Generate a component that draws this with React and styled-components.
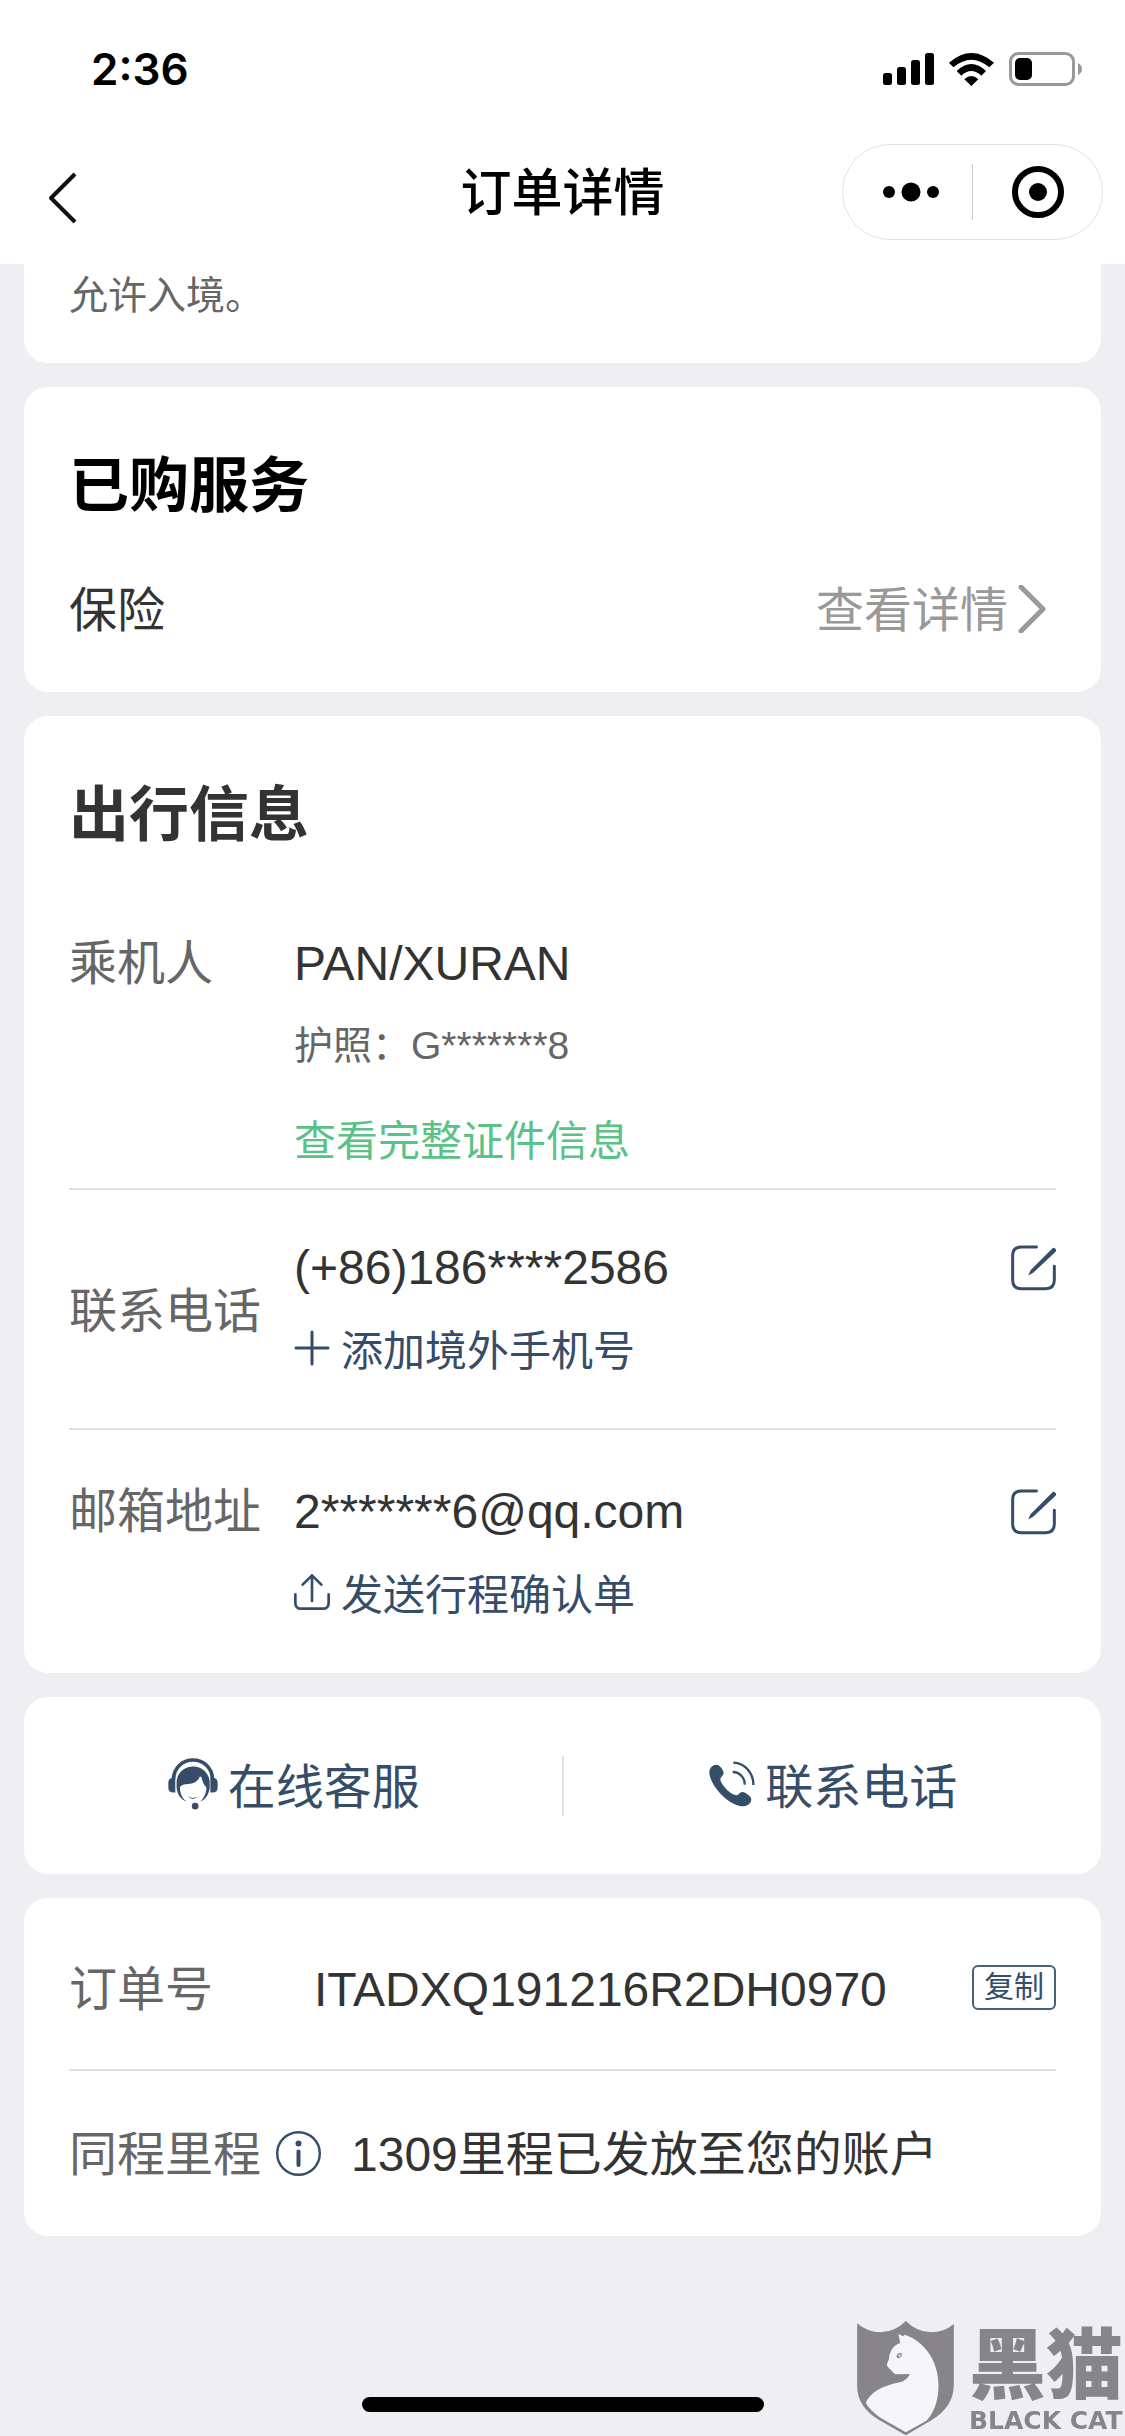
import React from 'react';
import styled, { createGlobalStyle } from 'styled-components';

const GlobalStyle = createGlobalStyle`
  * {
    box-sizing: border-box;
  }

  body {
    margin: 0;
    background: #eeeef3;
    font-family: 'Liberation Sans', 'Noto Sans CJK SC', sans-serif;
    color: #333;
  }

  h1, h2, p {
    margin: 0;
  }

  button {
    display: flex;
    align-items: center;
    justify-content: center;
    padding: 0;
    border: 0;
    background: none;
    color: inherit;
    font: inherit;
    cursor: pointer;
  }

  a {
    text-decoration: none;
  }

  svg {
    display: block;
    flex: none;
  }
`;

const Page = styled.div`
  min-height: 100vh;
  padding-bottom: 200px;
`;

const Header = styled.header`
  background: #fff;
`;

const StatusBar = styled.div`
  display: flex;
  align-items: center;
  justify-content: space-between;
  height: 138px;
  padding: 0 42px 0 91px;
`;

const Time = styled.time`
  font: 600 44px/54px Inter, sans-serif;
  color: #000;
`;

const StatusIcons = styled.div`
  display: flex;
  align-items: center;
  gap: 15px;
`;

const NavBar = styled.div`
  display: grid;
  grid-template-columns: 1fr auto 1fr;
  align-items: center;
  height: 126px;
  padding: 6px 22px 24px;
`;

const BackButton = styled.button`
  justify-self: start;
  padding: 12px 24px 0;
`;

const Title = styled.h1`
  padding-top: 4px;
  font-size: 51px;
  line-height: 72px;
  font-weight: 500;
  color: #000;
`;

const Capsule = styled.div`
  justify-self: end;
  display: flex;
  align-items: center;
  width: 261px;
  height: 96px;
  border: 1px solid #e2e2e2;
  border-radius: 48px;
`;

const CapsuleButton = styled.button`
  width: 129px;
  height: 100%;
  padding-left: ${(props) => (props.$inset ? '6px' : '0')};
`;

const CapsuleDivider = styled.div`
  width: 1px;
  height: 56px;
  background: #ccc;
`;

const Main = styled.main`
  display: flex;
  flex-direction: column;
  gap: 24px;
  padding: 0 24px;
`;

const Card = styled.section`
  padding: 58px 45px 47px;
  background: #fff;
  border-radius: 24px;
`;

const NoticeCard = styled(Card)`
  padding: 2px 45px 37px;
  border-radius: 0 0 24px 24px;
`;

const Notice = styled.p`
  font-size: 39px;
  line-height: 60px;
  color: #666;
`;

const Heading = styled.h2`
  font-size: 60px;
  line-height: 84px;
  font-weight: 700;
  color: ${(props) => props.$color || '#333'};
`;

const ServiceRow = styled.div`
  display: flex;
  justify-content: space-between;
  padding: 48px 10px 0 0;
  font-size: 48px;
  line-height: 68px;
`;

const DetailLink = styled.a`
  display: flex;
  align-items: center;
  gap: 10px;
  color: #999;

  svg {
    margin-bottom: 4px;
  }
`;

const InfoRow = styled.div`
  display: grid;
  grid-template-columns: 225px 1fr auto;
  align-items: ${(props) => props.$align || 'start'};
  padding: ${(props) => props.$padding};
  border-bottom: ${(props) => (props.$last ? 'none' : '2px solid #e0e0e0')};
`;

const Label = styled.div`
  font-size: 48px;
  line-height: 68px;
  color: #666;
`;

const Value = styled.div`
  font-size: 48px;
  line-height: 68px;
`;

const SubValue = styled.div`
  padding-top: 20px;
  font-size: 39px;
  line-height: 56px;
  color: #666;
`;

const GreenLink = styled.a`
  display: block;
  padding-top: 38px;
  font-size: 42px;
  line-height: 60px;
  color: #5ac286;
`;

const ContactValue = styled.div`
  padding-bottom: ${(props) => (props.$spaced ? '8px' : '0')};
`;

const ActionLink = styled.a`
  display: flex;
  align-items: center;
  gap: 11px;
  padding-top: 20px;
  font-size: 42px;
  line-height: 60px;
  color: #354d69;

  svg {
    margin-bottom: 8px;
  }
`;

const EditButton = styled.button`
  align-self: start;
  height: 68px;
`;

const ContactCard = styled(Card)`
  display: flex;
  align-items: center;
  height: 177px;
  padding: 0;
`;

const ContactButton = styled.button`
  flex: 1;
  gap: 10px;
  height: 100%;
  padding: 4px 0 0 2px;
  font-size: 48px;
  line-height: 68px;
  color: #354d69;

  svg {
    margin-bottom: 8px;
  }
`;

const ContactDivider = styled.div`
  width: 2px;
  height: 60px;
  background: #e0e0e0;
`;

const OrderRow = styled.div`
  display: flex;
  align-items: center;
  padding-bottom: 45px;
  border-bottom: 2px solid #e0e0e0;
`;

const OrderLabel = styled(Label)`
  width: 245px;
`;

const CopyButton = styled.button`
  margin: 0 0 6px auto;
  width: 84px;
  height: 45px;
  border: 2px solid #47607c;
  border-radius: 6px;
  font-size: 30px;
  line-height: 42px;
  color: #354d69;
`;

const MileageRow = styled.div`
  display: flex;
  align-items: center;
  padding-top: 50px;
`;

const InfoButton = styled.button`
  margin: 0 30px 4px 15px;
`;

const HomeIndicator = styled.div`
  position: fixed;
  bottom: 24px;
  left: 50%;
  width: 402px;
  height: 15px;
  margin-left: -201px;
  border-radius: 8px;
  background: #000;
`;

const Watermark = styled.div`
  position: fixed;
  right: 2px;
  bottom: 0;
  display: flex;
  align-items: flex-end;
  gap: 15px;
  color: #878588;
`;

const WatermarkText = styled.div`
  display: flex;
  flex-direction: column;
  gap: 2px;
`;

const BrandCn = styled.span`
  font: 900 77px/76px 'Liberation Sans', 'Noto Sans CJK SC', sans-serif;
`;

const BrandEn = styled.span`
  font: 700 25px/30px 'DejaVu Sans', sans-serif;
  white-space: nowrap;
`;

const SignalIcon = () => (
  <svg width="51" height="32" viewBox="0 0 51 32">
    <rect x="0" y="20" width="9" height="12" rx="2.5" />
    <rect x="14" y="14" width="9" height="18" rx="2.5" />
    <rect x="28" y="7" width="9" height="25" rx="2.5" />
    <rect x="42" y="0" width="9" height="32" rx="2.5" />
  </svg>
);

const WifiIcon = () => (
  <svg width="45" height="33" viewBox="371 96 135 99">
    <path d="M371 125Q438 67 506 125L492 139Q438 93 384 139Z" />
    <path d="M394 150Q438 108 482 150L468 164Q438 136 408 164Z" />
    <path d="M417 175Q438 155 459 175L438 195Z" />
  </svg>
);

const BatteryIcon = () => (
  <svg width="74" height="34" viewBox="0 0 74 34">
    <rect x="1.5" y="1.5" width="63" height="31" rx="8" fill="none" stroke="#999" strokeWidth="3" />
    <rect x="6" y="6" width="17" height="22" rx="5" />
    <path d="M69 11Q73 13 73 17T69 23Z" fill="#999" />
  </svg>
);

const BackIcon = () => (
  <svg width="32" height="54" viewBox="0 0 32 54" fill="none" stroke="#111" strokeWidth="4">
    <path d="M29 3L5 27L29 51" strokeLinejoin="round" />
  </svg>
);

const MoreIcon = () => (
  <svg width="56" height="20" viewBox="0 0 56 20">
    <circle cx="6" cy="10" r="6" />
    <circle cx="28" cy="10" r="9.5" />
    <circle cx="50" cy="10" r="6" />
  </svg>
);

const CloseIcon = () => (
  <svg width="52" height="52" viewBox="0 0 52 52">
    <circle cx="26" cy="26" r="23" fill="none" stroke="#000" strokeWidth="6" />
    <circle cx="26" cy="26" r="9" />
  </svg>
);

const ArrowIcon = () => (
  <svg width="28" height="48" viewBox="0 0 28 48" fill="none" stroke="#999" strokeWidth="5">
    <path d="M3 2L25 24L3 46" strokeLinecap="round" strokeLinejoin="round" />
  </svg>
);

const EditIcon = () => (
  <svg width="45" height="46" viewBox="93 43 136 137">
    <path
      d="M170 48H124Q98 48 98 74V148Q98 174 124 174H198Q224 174 224 148V106"
      fill="none"
      stroke="#354d69"
      strokeWidth="9"
      strokeLinecap="round"
    />
    <path d="M217 53A7 7 0 0 1 227 63L160 126L145 134L152 118Z" fill="#354d69" />
  </svg>
);

const PlusIcon = () => (
  <svg width="36" height="36" viewBox="0 0 36 36" stroke="#354d69" strokeWidth="3" strokeLinecap="round">
    <path d="M18 2V34M2 18H34" />
  </svg>
);

const UploadIcon = () => (
  <svg width="36" height="36" viewBox="42 42 108 108" fill="none" stroke="#354d69" strokeWidth="8">
    <path
      d="M46 103V128Q46 146 64 146H128Q146 146 146 128V103M96 48V123M68 74L96 46L124 74"
      strokeLinecap="round"
      strokeLinejoin="round"
    />
  </svg>
);

const ServiceIcon = () => (
  <svg width="50" height="52" viewBox="81 82 151 156" fill="#354d69">
    <path d="M98 144A58 56 0 0 1 215 144" fill="none" stroke="#354d69" strokeWidth="11" />
    <path d="M103 141V186H97Q82 186 82 170V157Q82 141 97 141ZM209 141V186H215Q231 186 231 170V157Q231 141 215 141Z" />
    <path d="M107 152C110 125 130 107 157 107C184 107 203 125 207 152V172C204 190 195 208 178 213C190 203 197 188 197 170C190 164 184 152 182 139L177 137C172 153 158 159 142 160C130 161 122 163 117 169C117 190 125 205 138 213C120 208 110 192 107 172Z" />
    <path d="M141 197Q156 207 171 197Q156 214 141 197Z" />
    <circle cx="163" cy="227" r="10" />
  </svg>
);

const PhoneIcon = () => (
  <svg width="46" height="46" viewBox="88 92 138 138">
    <path
      d="M89 128C88 112 101 102 111 103C120 103 130 118 132 126C132 137 121 141 122 149C128 168 152 192 170 195C177 196 179 185 188 185C198 186 215 198 215 208C213 222 199 229 185 228C143 222 92 166 89 128Z"
      fill="#354d69"
    />
    <path
      d="M161 97A62 65 0 0 1 221 164M159 125A36 36 0 0 1 195 163"
      fill="none"
      stroke="#354d69"
      strokeWidth="7"
    />
  </svg>
);

const InfoIcon = () => (
  <svg width="45" height="45" viewBox="0 0 45 45">
    <circle cx="22.5" cy="22.5" r="21.3" fill="none" stroke="#354d69" strokeWidth="2.4" />
    <circle cx="22.5" cy="12.5" r="3" fill="#354d69" />
    <path d="M22.5 20.5V34" stroke="#354d69" strokeWidth="4" strokeLinecap="round" />
  </svg>
);

const CatShield = () => (
  <svg width="97" height="115" viewBox="94 105 290 345">
    <path
      d="M94 112Q125 139 165 139Q207 138 240 105Q273 138 315 139Q355 139 384 114V295C384 345 358 378 318 402L240 448L160 402C118 376 94 345 94 300Z"
      fill="#878588"
    />
    <path
      d="M218 144L232 151L237 146C296 166 338 225 338 298C338 350 322 382 302 404L240 439L165 396C145 383 129 367 120 351C132 320 165 301 222 289Q243 284 252 264L208 265C202 257 189 249 184 239C182 232 187 227 189 220C192 194 202 179 223 171Z"
      fill="#f6f6f9"
    />
    <path d="M212 211Q216 198 228 202Q230 214 218 217Q213 217 212 211Z" fill="#878588" />
    <path d="M217 207L226 204L221 214Z" fill="#f6f6f9" />
  </svg>
);

const App = () => {
  return (
    <Page>
      <GlobalStyle />
      <Header>
        <StatusBar>
          <Time>2:36</Time>
          <StatusIcons>
            <SignalIcon />
            <WifiIcon />
            <BatteryIcon />
          </StatusIcons>
        </StatusBar>
        <NavBar>
          <BackButton aria-label="返回">
            <BackIcon />
          </BackButton>
          <Title>订单详情</Title>
          <Capsule>
            <CapsuleButton aria-label="更多" $inset>
              <MoreIcon />
            </CapsuleButton>
            <CapsuleDivider />
            <CapsuleButton aria-label="关闭">
              <CloseIcon />
            </CapsuleButton>
          </Capsule>
        </NavBar>
      </Header>

      <Main>
        <NoticeCard>
          <Notice>允许入境。</Notice>
        </NoticeCard>

        <Card>
          <Heading $color="#000">已购服务</Heading>
          <ServiceRow>
            <span>保险</span>
            <DetailLink href="#insurance">
              查看详情
              <ArrowIcon />
            </DetailLink>
          </ServiceRow>
        </Card>

        <Card>
          <Heading>出行信息</Heading>
          <InfoRow $padding="72px 0 16px">
            <Label>乘机人</Label>
            <div>
              <Value>PAN/XURAN</Value>
              <SubValue>护照：G*******8</SubValue>
              <GreenLink href="#passport">查看完整证件信息</GreenLink>
            </div>
          </InfoRow>
          <InfoRow $align="center" $padding="44px 0 38px">
            <Label>联系电话</Label>
            <ContactValue $spaced>
              <Value>(+86)186****2586</Value>
              <ActionLink href="#add-phone">
                <PlusIcon />
                添加境外手机号
              </ActionLink>
            </ContactValue>
            <EditButton aria-label="修改联系电话">
              <EditIcon />
            </EditButton>
          </InfoRow>
          <InfoRow $padding="48px 0 0" $last>
            <Label>邮箱地址</Label>
            <ContactValue>
              <Value>2*******6@qq.com</Value>
              <ActionLink href="#send">
                <UploadIcon />
                发送行程确认单
              </ActionLink>
            </ContactValue>
            <EditButton aria-label="修改邮箱地址">
              <EditIcon />
            </EditButton>
          </InfoRow>
        </Card>

        <ContactCard>
          <ContactButton>
            <ServiceIcon />
            在线客服
          </ContactButton>
          <ContactDivider />
          <ContactButton>
            <PhoneIcon />
            联系电话
          </ContactButton>
        </ContactCard>

        <Card>
          <OrderRow>
            <OrderLabel>订单号</OrderLabel>
            <Value>ITADXQ191216R2DH0970</Value>
            <CopyButton>复制</CopyButton>
          </OrderRow>
          <MileageRow>
            <Label>同程里程</Label>
            <InfoButton aria-label="里程说明">
              <InfoIcon />
            </InfoButton>
            <Value>1309里程已发放至您的账户</Value>
          </MileageRow>
        </Card>
      </Main>

      <HomeIndicator />
      <Watermark>
        <CatShield />
        <WatermarkText>
          <BrandCn>黑猫</BrandCn>
          <BrandEn>BLACK CAT</BrandEn>
        </WatermarkText>
      </Watermark>
    </Page>
  );
};

export default App;
